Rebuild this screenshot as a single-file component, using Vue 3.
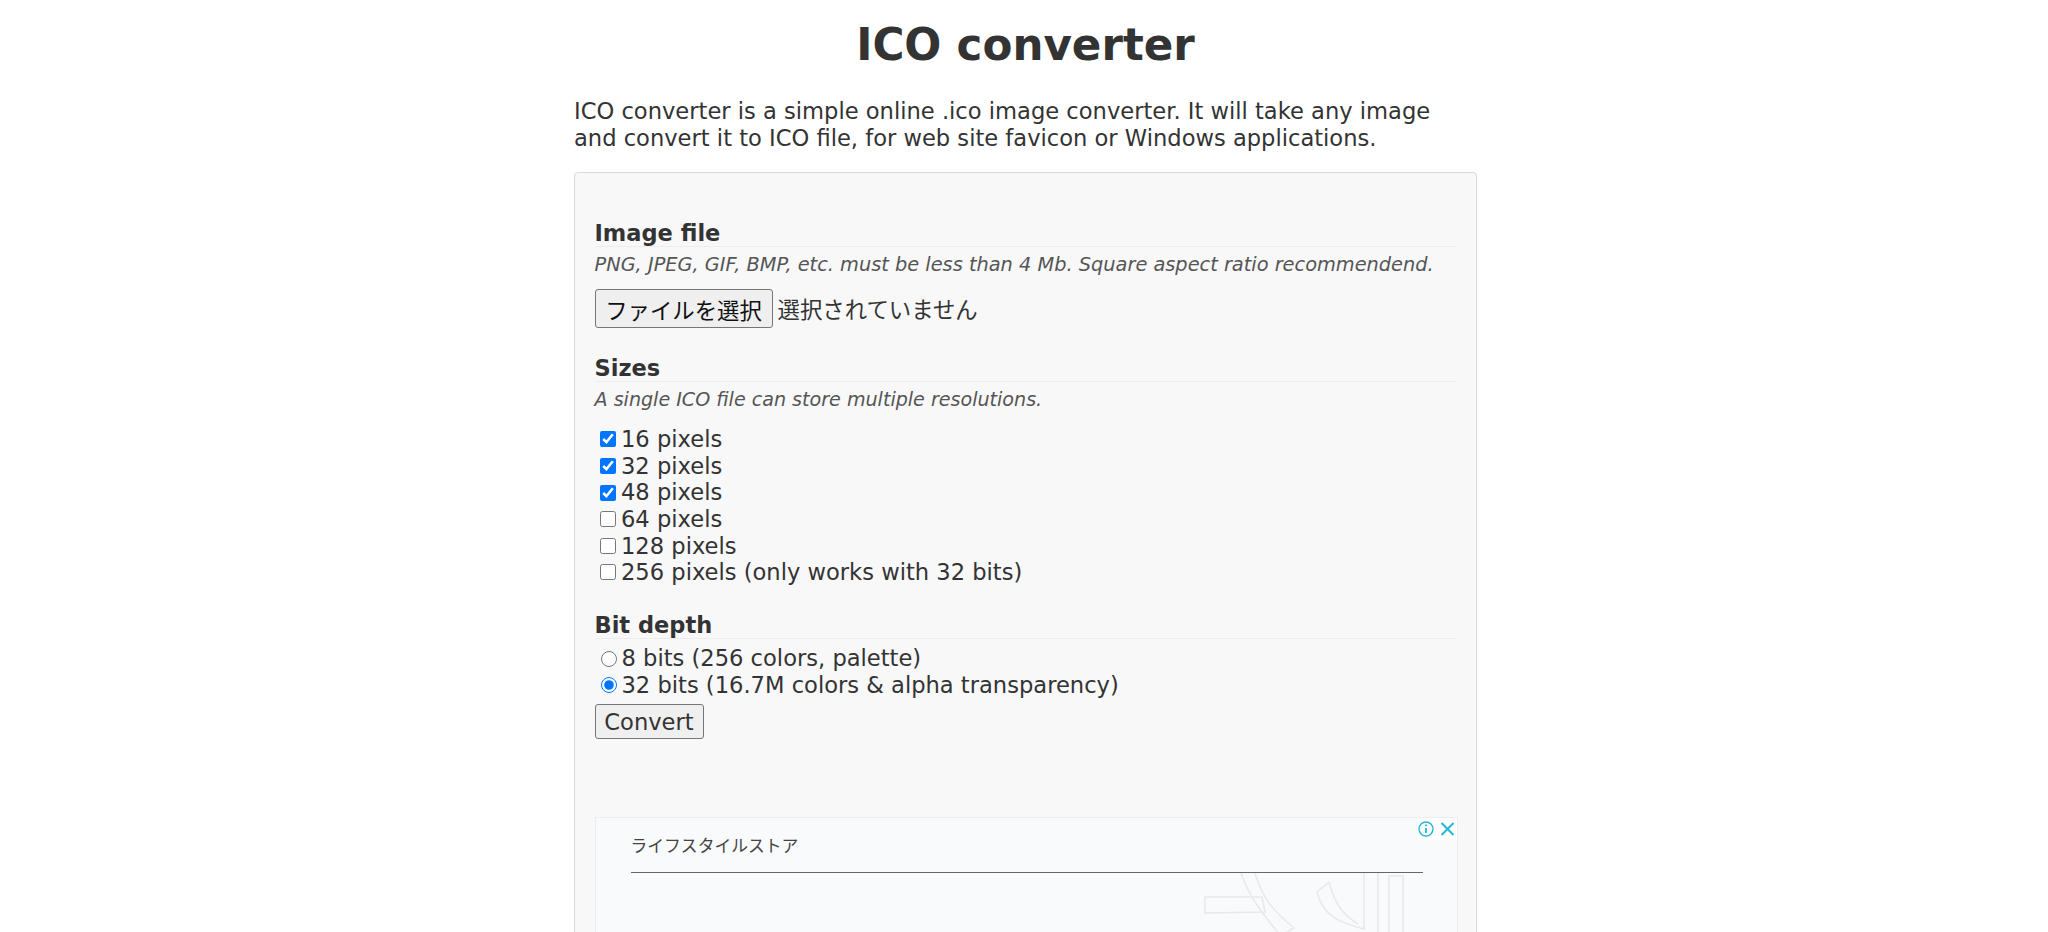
<script setup>
const sizes = [
  { label: '16 pixels', checked: true },
  { label: '32 pixels', checked: true },
  { label: '48 pixels', checked: true },
  { label: '64 pixels', checked: false },
  { label: '128 pixels', checked: false },
  { label: '256 pixels (only works with 32 bits)', checked: false },
]
const depths = [
  { label: '8 bits (256 colors, palette)', checked: false },
  { label: '32 bits (16.7M colors & alpha transparency)', checked: true },
]
</script>

<template>
  <div class="page">
    <main class="wrap">
      <h1 class="title">ICO converter</h1>
      <p class="intro">ICO converter is a simple online .ico image converter. It will take any image<br />and convert it to ICO file, for web site favicon or Windows applications.</p>
      <form class="panel" @submit.prevent>
        <h3 class="head first">Image file</h3>
        <p class="hint">PNG, JPEG, GIF, BMP, etc. must be less than 4 Mb. Square aspect ratio recommendend.</p>
        <div class="file">
          <button type="button" class="file-btn">ファイルを選択</button>
          <span class="file-name">選択されていません</span>
        </div>

        <h3 class="head sizes">Sizes</h3>
        <p class="hint sizes-hint">A single ICO file can store multiple resolutions.</p>
        <div class="checks">
          <label v-for="s in sizes" :key="s.label" class="row">
            <input type="checkbox" class="box" :checked="s.checked" />{{ s.label }}
          </label>
        </div>

        <h3 class="head depth">Bit depth</h3>
        <div class="radios">
          <label v-for="d in depths" :key="d.label" class="row">
            <input type="radio" name="depth" class="radio" :checked="d.checked" />{{ d.label }}
          </label>
        </div>
        <button type="button" class="convert">Convert</button>

        <aside class="ad">
          <div class="ad-badge">
            <svg width="40" height="22" viewBox="0 0 40 22" fill="none" stroke="#1fb9d8">
              <circle cx="9" cy="11" r="7" stroke-width="1.4" />
              <path d="M9 10v5" stroke-width="1.8" />
              <path d="M9 6.4v1.8" stroke-width="1.8" />
              <path d="M24.5 5l12 12M36.5 5l-12 12" stroke-width="2" />
            </svg>
          </div>
          <div class="ad-title">ライフスタイルストア</div>
          <svg class="ad-art" width="260" height="70" viewBox="0 0 260 70" fill="none" stroke="#e8e9eb" stroke-width="1.6">
            <path d="M54 24l57 0 3 15-60 1z" />
            <path d="M90 0c10 28 22 40 38 61" />
            <path d="M104 0c8 28 21 40 39 55l-10 6" />
            <path d="M178 9l-12 10c6 25 24 31 47 37V0" />
            <path d="M178 9c7 27 18 35 29 42" />
            <path d="M227 0v70" />
            <path d="M238 70V3h14v67" />
          </svg>
        </aside>
      </form>
    </main>
  </div>
</template>

<style scoped>
.page {
  font-family: "DejaVu Sans", Verdana, "Noto Sans CJK JP", sans-serif;
  color: #333;
  font-size: 22.6px;
  line-height: 26.6px;
  padding-left: 3px;
}
.wrap {
  width: 903px;
  margin: 0 auto;
}
.title {
  margin: 0;
  padding-top: 19px;
  font-size: 43.6px;
  line-height: 52px;
  font-weight: 700;
  text-align: center;
}
.intro {
  margin: 27px 0 0;
}
.panel {
  margin-top: 21px;
  padding: 47px 19px 0 19.5px;
  background: #f8f8f9;
  border: 1px solid #d9d9d9;
  border-radius: 4px;
}
.head {
  margin: 0;
  font-size: 22.5px;
  line-height: 26px;
  font-weight: 700;
  border-bottom: 1px solid #ececec;
}
.sizes {
  margin-top: 27px;
}
.depth {
  margin-top: 26px;
}
.hint {
  margin: 5px 0 0;
  font-style: italic;
  font-size: 19.35px;
  line-height: 26px;
  color: #555;
}
.sizes-hint {
  font-size: 19.1px;
}
.file {
  margin-top: 11px;
  display: flex;
  align-items: center;
}
.file-btn {
  width: 178px;
  height: 39px;
  padding: 0;
  font-family: "Noto Sans CJK JP", sans-serif;
  font-size: 22.4px;
  color: #111;
  background: #efefef;
  border: 1.3px solid #767676;
  border-radius: 3px;
}
.file-name {
  margin-left: 5px;
  font-family: "Noto Sans CJK JP", sans-serif;
  font-size: 22.4px;
}
.checks {
  margin-top: 13px;
  display: flex;
  flex-direction: column;
}
.radios {
  margin-top: 6.5px;
  display: flex;
  flex-direction: column;
}
.row {
  display: flex;
  align-items: center;
  height: 26.6px;
  color: #333;
}
.box {
  width: 16px;
  height: 16px;
  margin: 0 5px 0 5.5px;
}
.radio {
  width: 16px;
  height: 16px;
  margin: 0 5px 0 6px;
}
.convert {
  display: block;
  margin-top: 6px;
  width: 109px;
  height: 35px;
  padding: 0;
  font-family: inherit;
  font-size: 22.6px;
  color: #333;
  background: #efefef;
  border: 1.3px solid #767676;
  border-radius: 3px;
}
.ad {
  position: relative;
  margin-top: 77.5px;
  margin-right: -1px;
  height: 300px;
  background: #f9fafc;
  border: 1px solid #ededed;
}
.ad-badge {
  position: absolute;
  top: 0;
  right: 0;
  display: flex;
  background: #fff;
}
.ad-title {
  margin: 13px 0 0 35px;
  width: 792px;
  height: 41px;
  font-family: "Noto Sans CJK JP", sans-serif;
  font-size: 16.8px;
  line-height: 28px;
  color: #444;
  border-bottom: 1px solid #666;
}
.ad-art {
  position: absolute;
  top: 55px;
  left: 555px;
}
</style>

<style>
html, body {
  overflow: hidden;
  background: #fff;
}
</style>
